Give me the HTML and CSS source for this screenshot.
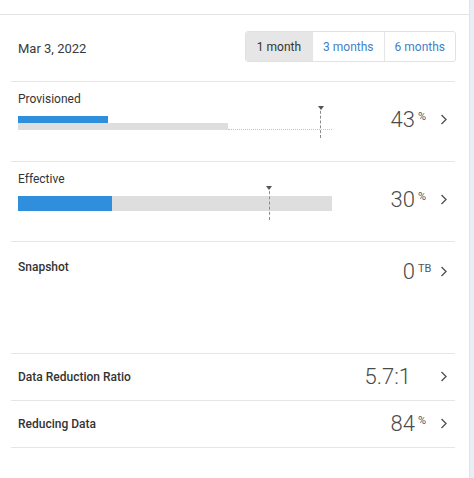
FILE: index.html
```html
<!DOCTYPE html>
<html>
<head>
<meta charset="utf-8">
<link rel="stylesheet" href="styles.css">
</head>
<body>
<div class="page">
  <div class="card">
    <div class="inner">
      <div class="header">
        <div class="date">Mar 3, 2022</div>
        <div class="seg">
          <div class="seg-item active">1 month</div>
          <div class="seg-item">3 months</div>
          <div class="seg-item">6 months</div>
        </div>
      </div>

      <div class="row bar-row">
        <div class="left">
          <div class="label">Provisioned</div>
          <div class="track stacked">
            <div class="fill thin" style="width:28.7%"></div>
            <div class="grey-line">
              <div class="grey thin" style="width:66.9%"></div>
              <div class="dash"></div>
            </div>
            <div class="marker prov" style="left:96.2%"></div>
          </div>
        </div>
        <div class="val bar-val">
          <span class="num">43</span><span class="unit">%</span>
          <span class="chev"><svg width="8" height="11" viewBox="0 0 8 11"><path d="M1.5 1 L6 5.5 L1.5 10" fill="none" stroke="#555" stroke-width="1.4"/></svg></span>
        </div>
      </div>

      <div class="row bar-row">
        <div class="left">
          <div class="label">Effective</div>
          <div class="track full">
            <div class="fill thick" style="width:29.9%"></div>
            <div class="marker eff" style="left:79.9%"></div>
          </div>
        </div>
        <div class="val bar-val">
          <span class="num">30</span><span class="unit">%</span>
          <span class="chev"><svg width="8" height="11" viewBox="0 0 8 11"><path d="M1.5 1 L6 5.5 L1.5 10" fill="none" stroke="#555" stroke-width="1.4"/></svg></span>
        </div>
      </div>

      <div class="row snap-row">
        <div class="label strong">Snapshot</div>
        <div class="val snap-val">
          <span class="num">0</span><span class="unit">TB</span>
          <span class="chev"><svg width="8" height="11" viewBox="0 0 8 11"><path d="M1.5 1 L6 5.5 L1.5 10" fill="none" stroke="#555" stroke-width="1.4"/></svg></span>
        </div>
      </div>

      <div class="row plain-row">
        <div class="label strong">Data Reduction Ratio</div>
        <div class="val">
          <span class="num ratio">5.7:1</span><span class="unit"></span>
          <span class="chev"><svg width="8" height="11" viewBox="0 0 8 11"><path d="M1.5 1 L6 5.5 L1.5 10" fill="none" stroke="#555" stroke-width="1.4"/></svg></span>
        </div>
      </div>

      <div class="row plain-row">
        <div class="label strong">Reducing Data</div>
        <div class="val">
          <span class="num">84</span><span class="unit">%</span>
          <span class="chev"><svg width="8" height="11" viewBox="0 0 8 11"><path d="M1.5 1 L6 5.5 L1.5 10" fill="none" stroke="#555" stroke-width="1.4"/></svg></span>
        </div>
      </div>
    </div>
  </div>
</div>
</body>
</html>
```

FILE: styles.css
```css
html, body {
  margin: 0;
  padding: 0;
}
body {
  background: #e8eef8;
  font-family: Roboto, "Liberation Sans", sans-serif;
  color: #333;
  width: 474px;
  height: 478px;
  overflow: hidden;
}
.page {
  width: 470px;
  height: 478px;
  background: #fff;
  border-right: 1px solid #dfe4ea;
  padding-top: 14px;
  box-sizing: border-box;
}
.card {
  border-top: 1px solid #e3e3e3;
}
.inner {
  margin: 0 14px 0 11px;
}
.header {
  display: flex;
  justify-content: space-between;
  align-items: center;
  padding: 16px 0 19px 7px;
  border-bottom: 1px solid #e6e6e6;
}
.date {
  font-size: 13px;
  color: #3a3a3a;
  margin-top: 3px;
}
.seg {
  display: flex;
  height: 31px;
  box-sizing: border-box;
  border: 1px solid #e2e2e2;
  border-radius: 3px;
  overflow: hidden;
  margin-right: -1px;
}
.seg-item {
  display: flex;
  align-items: center;
  padding: 0 10px;
  font-size: 12px;
  color: #3f7fc8;
  border-left: 1px solid #e6e6e6;
}
.seg-item:first-child {
  border-left: none;
  padding: 0 11px;
}
.seg-item.active {
  background: #e6e6e6;
  color: #333;
}
.row {
  display: flex;
  justify-content: space-between;
  padding: 0 7px;
  border-bottom: 1px solid #e6e6e6;
  box-sizing: border-box;
}
.bar-row {
  height: 80px;
  padding-top: 10px;
  align-items: flex-start;
}
.snap-row {
  height: 112px;
  padding-top: 18px;
  align-items: flex-start;
}
.plain-row {
  height: 47px;
  align-items: center;
}
.label {
  font-size: 12px;
  line-height: 14px;
  color: #333;
}
.label.strong {
  font-weight: 500;
}
.left {
  width: 314px;
}
.track {
  position: relative;
  width: 314px;
  margin-top: 10px;
}
.track.full {
  height: 15px;
  background: #dedede;
}
.fill {
  background: #2f8fdd;
}
.fill.thin {
  height: 7px;
}
.fill.thick {
  height: 15px;
}
.grey-line {
  display: flex;
  align-items: flex-end;
}
.grey.thin {
  height: 7px;
  background: #dedede;
}
.dash {
  flex: 1;
  border-bottom: 1px dotted #c4c4c4;
}
.marker {
  position: absolute;
  width: 0;
  border-left: 1px dashed #8a8a8a;
}
.marker.prov {
  top: -10px;
  bottom: -8px;
}
.marker.eff {
  top: -10px;
  bottom: -9px;
}
.marker::before {
  content: "";
  position: absolute;
  top: 0;
  left: -3.5px;
  border-left: 3px solid transparent;
  border-right: 3px solid transparent;
  border-top: 4px solid #555;
}
.val {
  display: flex;
  align-items: center;
}
.bar-val {
  margin-top: 15px;
}
.snap-val {
  margin-top: -1px;
}
.num {
  font-size: 22px;
  line-height: 26px;
  font-weight: 300;
  color: #4a4a4a;
}
.num.ratio {
  margin-right: 4px;
}
.unit {
  align-self: flex-start;
  width: 23px;
  box-sizing: border-box;
  padding-left: 3px;
  margin-top: 3px;
  font-size: 11px;
  line-height: 13px;
  color: #555;
}
.chev {
  width: 10px;
  display: flex;
  justify-content: flex-end;
  margin-top: -1px;
}
.chev svg {
  display: block;
}
```
